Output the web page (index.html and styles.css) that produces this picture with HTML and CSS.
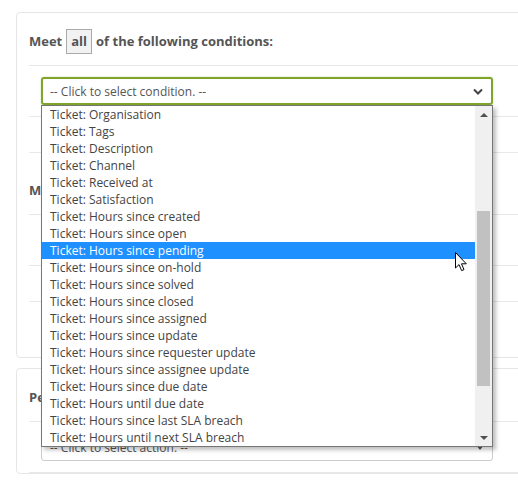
FILE: index.html
```html
<!DOCTYPE html>
<html lang="en">
<head>
    <meta charset="UTF-8">
    <meta name="viewport" content="width=device-width, initial-scale=1.0">
    <title>Trigger conditions</title>
    <link rel="stylesheet" href="styles.css">
</head>
<body>
    <div class="page">
        <div class="card">
            <div class="section-head first">
                <h2>Meet <span class="toggle">all</span> of the following conditions:</h2>
            </div>
            <div class="row">
                <div class="select active">
                    <span>-- Click to select condition. --</span>
                    <svg class="chevron" width="10" height="7" viewBox="0 0 10 7"><polyline points="1,1.5 5,5.5 9,1.5" fill="none" stroke="#444" stroke-width="2"/></svg>
                </div>
            </div>
            <div class="row empty"></div>
            <div class="section-head">
                <h2>Meet <span class="toggle">any</span> of the following conditions:</h2>
            </div>
            <div class="row">
                <div class="select">
                    <span>-- Click to select condition. --</span>
                    <svg class="chevron" width="10" height="7" viewBox="0 0 10 7"><polyline points="1,1.5 5,5.5 9,1.5" fill="none" stroke="#444" stroke-width="2"/></svg>
                </div>
            </div>
            <div class="row empty"></div>
            <div class="card-foot"></div>
        </div>

        <div class="card">
            <div class="section-head first">
                <h2>Perform these actions:</h2>
            </div>
            <div class="row">
                <div class="select">
                    <span>-- Click to select action. --</span>
                    <svg class="chevron small" width="8" height="5" viewBox="0 0 8 5"><polygon points="0,0 8,0 4,5" fill="#555"/></svg>
                </div>
            </div>
        </div>

        <!-- open list of the condition select -->
        <div class="dropdown">
            <ul class="options">
                <li>Ticket: Organisation</li>
                <li>Ticket: Tags</li>
                <li>Ticket: Description</li>
                <li>Ticket: Channel</li>
                <li>Ticket: Received at</li>
                <li>Ticket: Satisfaction</li>
                <li>Ticket: Hours since created</li>
                <li>Ticket: Hours since open</li>
                <li class="selected">Ticket: Hours since pending</li>
                <li>Ticket: Hours since on-hold</li>
                <li>Ticket: Hours since solved</li>
                <li>Ticket: Hours since closed</li>
                <li>Ticket: Hours since assigned</li>
                <li>Ticket: Hours since update</li>
                <li>Ticket: Hours since requester update</li>
                <li>Ticket: Hours since assignee update</li>
                <li>Ticket: Hours since due date</li>
                <li>Ticket: Hours until due date</li>
                <li>Ticket: Hours since last SLA breach</li>
                <li>Ticket: Hours until next SLA breach</li>
            </ul>
            <div class="scrollbar">
                <div class="arrow up"></div>
                <div class="track">
                    <div class="thumb"></div>
                </div>
                <div class="arrow down"></div>
            </div>
        </div>

        <svg class="cursor" width="14" height="21" viewBox="0 0 14 21">
            <path d="M0.5,0.5 L0.5,16 L4,12.6 L6.6,18.6 L9,17.6 L6.5,11.8 L11.3,11.8 Z" fill="#fff" stroke="#000" stroke-width="1"/>
        </svg>
    </div>
</body>
</html>
```

FILE: styles.css
```css
body {
    margin: 0;
    padding: 0;
    background-color: #fff;
    font-family: "Open Sans", "Noto Sans", sans-serif;
    color: #555;
    overflow: hidden;
}

.page {
    position: relative;
    padding: 12px 0 0 16px;
    width: 540px;
}

.card {
    border: 1px solid #e6e6e6;
    border-radius: 4px;
    margin-bottom: 10px;
    padding-left: 12px;
}

.section-head {
    display: flex;
    align-items: center;
    height: 62px;
    padding-top: 13px;
    box-sizing: border-box;
    border-bottom: 1px solid #e8e8e8;
}

.section-head.first {
    height: 53px;
    padding-top: 4px;
}

h2 {
    margin: 0;
    font-size: 13px;
    font-weight: bold;
    color: #555;
    display: flex;
    align-items: center;
    gap: 4px;
}

.toggle {
    display: inline-block;
    border: 1px solid #aaa;
    background-color: #f2f2f2;
    padding: 3px 4px;
    line-height: 17px;
    font-weight: bold;
}

.row {
    height: 51px;
    padding: 11px 0 0 12px;
    box-sizing: border-box;
    border-bottom: 1px solid #e8e8e8;
}

.row.empty {
    height: 36px;
    padding: 0;
}

.card-foot {
    height: 55px;
}

.select {
    display: flex;
    align-items: center;
    justify-content: space-between;
    width: 452px;
    height: 28px;
    box-sizing: border-box;
    border: 1px solid #ccc;
    border-radius: 3px;
    padding: 0 8px 0 8px;
    font-size: 12px;
    color: #555;
}

.select.active {
    border: 2px solid #7fa62a;
    padding-left: 7px;
    box-shadow: 0 0 2px rgba(127, 166, 42, 0.4);
}

.dropdown {
    position: absolute;
    left: 41px;
    top: 105px;
    width: 452px;
    height: 342px;
    box-sizing: border-box;
    border: 1px solid #767676;
    background-color: #fff;
    display: flex;
    box-shadow: 3px 3px 4px rgba(0, 0, 0, 0.25);
}

.options {
    list-style: none;
    margin: 0;
    padding: 0;
    flex: 1;
}

.options li {
    height: 17px;
    line-height: 17px;
    padding-left: 8px;
    font-size: 12px;
    color: #444;
    white-space: nowrap;
}

.options li.selected {
    background-color: #1e90ff;
    color: #fff;
}

.scrollbar {
    width: 17px;
    background-color: #f0f0f0;
    display: flex;
    flex-direction: column;
}

.arrow {
    height: 17px;
    display: flex;
    align-items: center;
    justify-content: center;
}

.arrow.up::before,
.arrow.down::before {
    content: "";
    border-left: 4px solid transparent;
    border-right: 4px solid transparent;
}

.arrow.up::before {
    border-bottom: 4px solid #505050;
}

.arrow.down::before {
    border-top: 4px solid #505050;
}

.track {
    flex: 1;
    padding: 88px 2px 0 2px;
}

.thumb {
    height: 175px;
    background-color: #c1c1c1;
}

.cursor {
    position: absolute;
    left: 455px;
    top: 252px;
}
```
